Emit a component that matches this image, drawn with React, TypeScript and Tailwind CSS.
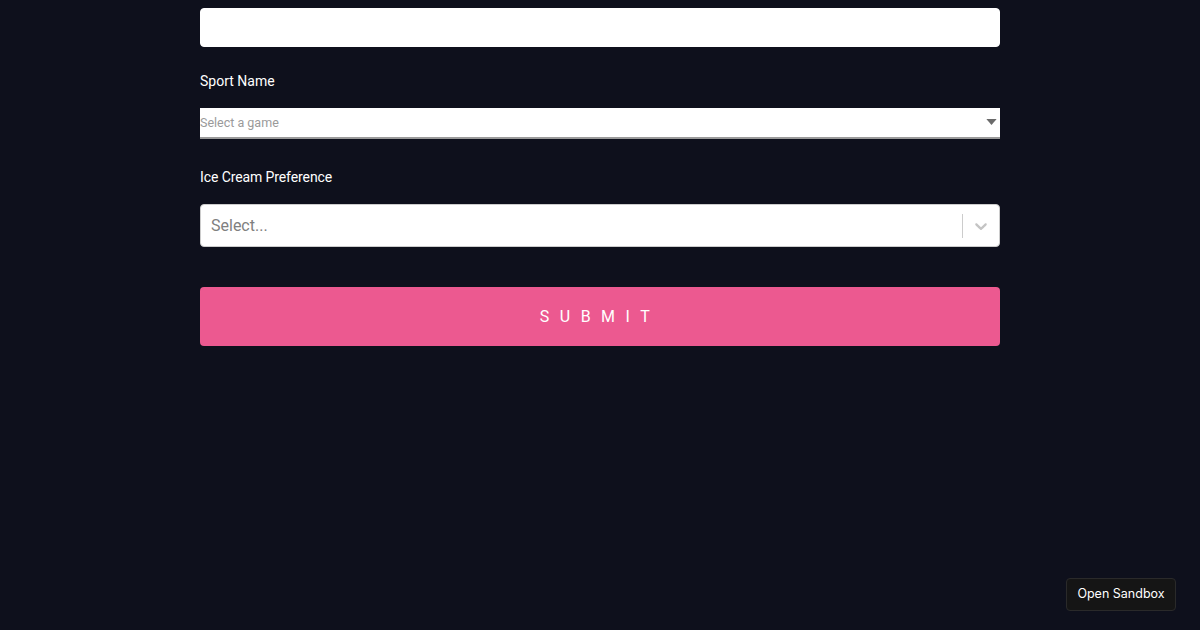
import React from "react";

export default function App() {
  return (
    <div className="relative min-h-[630px] w-full bg-[#0e101c] font-['Roboto','Liberation_Sans',sans-serif]">
      <form className="mx-auto w-[800px] pt-2" onSubmit={(e) => e.preventDefault()}>
        <input
          className="block h-[39px] w-full rounded-[4px] border border-white bg-white px-[15px] text-sm text-black outline-none"
          aria-label="name"
        />
        <label className="mt-5 mb-[13px] block text-left text-sm leading-[28px] font-normal text-white">
          Sport Name
        </label>
        <div className="relative h-[31px] w-full border-b-2 border-b-[#9a9a9a] bg-white">
          <span className="absolute left-0 top-[6px] text-[12.5px] text-[#9a9a9a]">Select a game</span>
          <svg className="absolute right-[3px] top-[11px]" width="11" height="6" viewBox="0 0 12 7">
            <path d="M0 0 L12 0 L6 7 Z" fill="#6b6b6b" />
          </svg>
        </div>
        <label className="mt-[24px] mb-[13px] block text-left text-sm leading-[28px] font-normal tracking-[-0.1px] text-white">
          Ice Cream Preference
        </label>
        <div className="flex h-[43px] w-full items-center rounded-[4px] border border-[#cccccc] bg-white">
          <span className="flex-1 pl-[10px] text-base text-[#808080]">Select...</span>
          <span className="h-[24px] w-px bg-[#cccccc]" />
          <span className="flex w-[36px] items-center justify-center">
            <svg width="20" height="20" viewBox="0 0 20 20">
              <path
                d="M4.516 7.548c0.436-0.446 1.043-0.481 1.576 0l3.908 3.747 3.908-3.747c0.533-0.481 1.141-0.446 1.574 0 0.436 0.445 0.408 1.197 0 1.615-0.406 0.418-4.695 4.502-4.695 4.502-0.217 0.223-0.502 0.335-0.787 0.335s-0.57-0.112-0.789-0.335c0 0-4.287-4.084-4.695-4.502s-0.436-1.17 0-1.615z"
                fill="#c4c4c4"
              />
            </svg>
          </span>
        </div>
        <button
          type="submit"
          className="mt-[40px] block h-[59px] w-full rounded-[4px] bg-[#ec5990] text-base uppercase tracking-[10.5px] text-white"
        >
          Submit
        </button>
      </form>
      <button className="absolute right-[24px] bottom-[19px] h-[33px] w-[110px] rounded-[4px] border border-[#2a2a2a] bg-[#151515] text-[12.5px] text-white font-['Inter','Liberation_Sans',sans-serif]">
        Open Sandbox
      </button>
    </div>
  );
}
